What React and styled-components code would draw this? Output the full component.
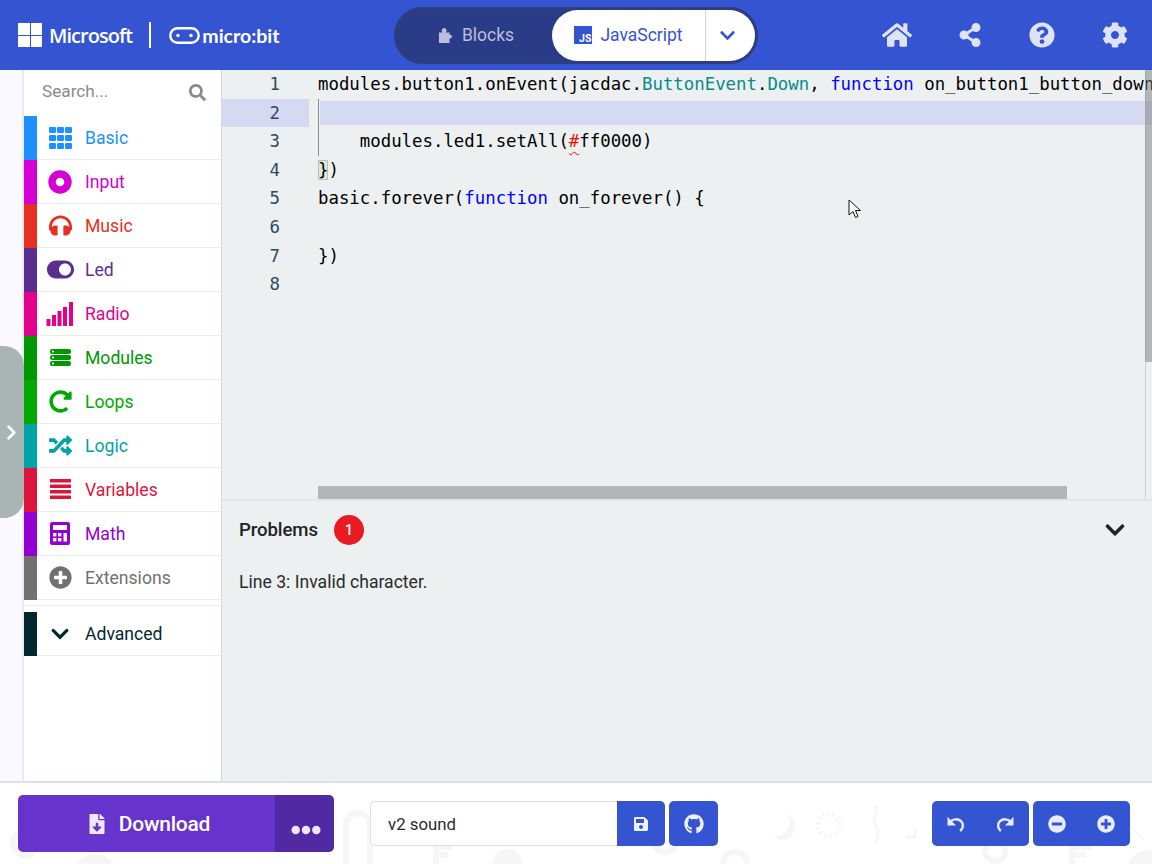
import React from "react";
import styled, { createGlobalStyle } from "styled-components";
import {
  FaHome,
  FaShareAlt,
  FaQuestionCircle,
  FaCog,
  FaSearch,
  FaSave,
  FaGithub,
  FaMinusCircle,
  FaPlusCircle,
  FaFileDownload,
  FaChevronDown,
  FaChevronRight,
  FaHeadphones,
  FaToggleOn,
  FaRandom,
  FaRedoAlt,
  FaEllipsisH,
} from "react-icons/fa";

const GlobalStyle = createGlobalStyle`
  html, body {
    margin: 0;
    padding: 0;
    height: 100%;
    overflow: hidden;
    font-family: Roboto, "Liberation Sans", sans-serif;
  }
  * { box-sizing: border-box; }
`;

const PuzzleIcon = () => (
  <svg width="13" height="15" viewBox="0 0 13 15" fill="currentColor">
    <path d="M0 4.500h3.500C3 4 2.800 3.300 2.800 2.600 2.800 1.200 3.900 0 5.200 0s2.400 1.200 2.400 2.600c0 .7-.2 1.400-.7 1.900H10.500V6.800c1.300-.4 2.500.5 2.500 1.800s-1.200 2.200-2.500 1.800V15H0z" />
  </svg>
);

const BasicIcon = () => (
  <svg width="23" height="22" viewBox="0 0 23 22" fill="currentColor">
    {[0, 8, 16].map((x) =>
      [0, 8, 16].map((y) => <rect key={`${x}-${y}`} x={x} y={y} width="7" height="6" rx="1" />)
    )}
  </svg>
);

const InputIcon = () => (
  <svg width="24" height="24" viewBox="0 0 24 24">
    <circle cx="12" cy="12" r="8" fill="none" stroke="currentColor" strokeWidth="7.4" />
  </svg>
);

const RadioIcon = () => (
  <svg width="28" height="24" viewBox="0 0 28 24" fill="currentColor">
    <rect x="0.5" y="17" width="4" height="7" />
    <rect x="6" y="13" width="4" height="11" />
    <rect x="11.500" y="9" width="4" height="15" />
    <rect x="17" y="5" width="4" height="19" />
    <rect x="23" y="0" width="4" height="24" />
  </svg>
);

const ModulesIcon = () => (
  <svg width="21" height="17" viewBox="0 0 21 17" fill="currentColor">
    {[0, 6, 12].map((y) => (
      <g key={y}>
        <rect x="0" y={y} width="21" height="5" rx="2" />
        <circle cx="3" cy={y + 2.5} r="1.1" fill="#fff" />
      </g>
    ))}
  </svg>
);

const VariablesIcon = () => (
  <svg width="21" height="21" viewBox="0 0 21 21" fill="currentColor">
    {[0, 5.500, 11, 16.500].map((y) => (
      <rect key={y} x="0" y={y} width="21" height="3.6" rx="0.5" />
    ))}
  </svg>
);

const MathIcon = () => (
  <svg width="20" height="23" viewBox="0 0 20 23">
    <rect width="20" height="23" rx="2" fill="currentColor" />
    <rect x="3" y="3" width="14" height="5" fill="#fff" />
    {[3, 8, 13].map((x) =>
      [11, 16].map((y) =>
        x === 13 ? null : <rect key={`${x}-${y}`} x={x} y={y} width="3.4" height="3.4" fill="#fff" />
      )
    )}
    <rect x="13.500" y="11" width="3.500" height="8.500" fill="#fff" />
  </svg>
);

const UndoIcon = ({ flip }) => (
  <svg
    width="18"
    height="16"
    viewBox="0 0 18 16"
    fill="none"
    style={flip ? { transform: "scaleX(-1)" } : undefined}
  >
    <path d="M3.500 5.500C6 2.800 11 2.500 14 5.200c2.800 2.800 2.500 7-.8 9.800" stroke="currentColor" strokeWidth="2.400" />
    <path d="M0.500 0.800V9.500H9z" fill="currentColor" />
  </svg>
);

const categories = [
  { name: "Basic", color: "#1e90ff", icon: <BasicIcon /> },
  { name: "Input", color: "#d400d4", icon: <InputIcon /> },
  { name: "Music", color: "#e63022", icon: <FaHeadphones size={23} /> },
  { name: "Led", color: "#5c2d91", icon: <FaToggleOn size={27} /> },
  { name: "Radio", color: "#e3008c", icon: <RadioIcon /> },
  { name: "Modules", color: "#009800", icon: <ModulesIcon /> },
  { name: "Loops", color: "#00aa00", icon: <FaRedoAlt size={23} /> },
  { name: "Logic", color: "#00a4a6", icon: <FaRandom size={23} /> },
  { name: "Variables", color: "#dc143c", icon: <VariablesIcon /> },
  { name: "Math", color: "#9400d3", icon: <MathIcon /> },
  { name: "Extensions", color: "#717171", icon: <FaPlusCircle size={23} /> },
];

export default function App() {
  return (
    <Page>
      <GlobalStyle />
      <Header>
        <Brand>
          <MsLogo>
            <i />
            <i />
            <i />
            <i />
          </MsLogo>
          <MsName>Microsoft</MsName>
          <BrandDivider />
          <svg width="31" height="17" viewBox="0 0 31 17" fill="none">
            <rect x="1.300" y="1.300" width="28.400" height="14.400" rx="7.200" stroke="#fff" strokeWidth="2.400" />
            <circle cx="9" cy="8.500" r="1.700" fill="#fff" />
            <circle cx="22" cy="8.500" r="1.700" fill="#fff" />
          </svg>
          <BitName>micro:bit</BitName>
        </Brand>
        <Toggle>
          <BlocksTab>
            <PuzzleIcon />
            Blocks
          </BlocksTab>
          <JsTab>
            <JsBadge>JS</JsBadge>
            JavaScript
          </JsTab>
          <ArrowTab>
            <FaChevronDown size={17} />
          </ArrowTab>
        </Toggle>
        <HeaderIcons>
          <FaHome size={30} />
          <FaShareAlt size={24} />
          <FaQuestionCircle size={26} />
          <FaCog size={26} />
        </HeaderIcons>
      </Header>

      <Main>
        <Strip />
        <Toolbox>
          <SearchRow>
            Search...
            <FaSearch size={17} />
          </SearchRow>
          {categories.map((c) => (
            <Category key={c.name} $color={c.color}>
              <CategoryIcon>{c.icon}</CategoryIcon>
              {c.name}
            </Category>
          ))}
          <AdvancedDivider />
          <Category $color="#02272d">
            <CategoryIcon>
              <FaChevronDown size={20} />
            </CategoryIcon>
            Advanced
          </Category>
        </Toolbox>
        <Handle>
          <FaChevronRight size={17} />
        </Handle>

        <Workspace>
          <Editor>
            <Gutter>
              {[1, 2, 3, 4, 5, 6, 7, 8].map((n) => (
                <LineNumber key={n} $active={n === 2}>
                  {n}
                </LineNumber>
              ))}
            </Gutter>
            <Code>
              <IndentGuide />
              <Line>
                modules.button1.onEvent(jacdac.<Type>ButtonEvent</Type>.<Type>Down</Type>,{" "}
                <Keyword>function</Keyword> on_button1_button_down() {"{"}
              </Line>
              <Line $active />
              <Line>
                {"    modules.led1.setAll("}
                <ErrorMark>#</ErrorMark>ff0000)
              </Line>
              <Line>
                <Bracket>{"}"}</Bracket>)
              </Line>
              <Line>
                basic.forever(<Keyword>function</Keyword> on_forever() {"{"}
              </Line>
              <Line />
              <Line>{"})"}</Line>
              <Line />
            </Code>
            <VerticalTrack>
              <VerticalThumb />
            </VerticalTrack>
            <HorizontalThumb />
            <Cursor width="13" height="20" viewBox="0 0 13 20">
              <path d="M1 1v15l4-3.500 2.500 6 2.500-1-2.500-6h5z" fill="#fff" stroke="#111" strokeWidth="1" />
            </Cursor>
          </Editor>
          <Problems>
            <ProblemsHead>
              <ProblemsTitle>Problems</ProblemsTitle>
              <Badge>1</Badge>
              <Collapse>
                <FaChevronDown size={22} />
              </Collapse>
            </ProblemsHead>
            <ProblemText>Line 3: Invalid character.</ProblemText>
          </Problems>
        </Workspace>
      </Main>

      <Footer>
        <Pattern width="1152" height="83" viewBox="0 0 1152 83" fill="none" stroke="#f6f6f6">
          <rect x="346" y="32" width="24" height="70" rx="12" strokeWidth="6" />
          <path d="M18 52a12 12 0 0 0 16 20" strokeWidth="6" />
          <circle cx="95" cy="95" r="22" fill="#f6f6f6" stroke="none" />
          <path d="M436 83V66h16M436 74h12" strokeWidth="6" />
          <circle cx="507" cy="83" r="15" fill="#f6f6f6" stroke="none" />
          <path d="M653 64a14 14 0 0 0 24 0" strokeWidth="6" />
          <circle cx="735" cy="83" r="12" strokeWidth="6" />
          <path d="M788 34a11 11 0 0 1-13 22 14 14 0 0 0 13-22z" fill="#f6f6f6" strokeWidth="2" />
          <circle cx="829" cy="44" r="11" strokeWidth="5" strokeDasharray="2 3" />
          <path d="M875 25c5 8-4 10 0 18s4 10 1 20" strokeWidth="2.500" />
          <path d="M915 47v9h-9" strokeWidth="3" />
          <circle cx="995" cy="70" r="10" strokeWidth="6" />
          <path d="M1072 83V66h20M1072 74h14" strokeWidth="6" />
          <circle cx="1147" cy="88" r="19" fill="#f6f6f6" stroke="none" />
          <path d="M1130 45l15 15" strokeWidth="1.500" />
        </Pattern>
        <DownloadGroup>
          <DownloadButton>
            <FaFileDownload size={20} />
            Download
          </DownloadButton>
          <MoreButton>
            <FaEllipsisH size={30} />
          </MoreButton>
        </DownloadGroup>
        <NameGroup>
          <NameInput>v2 sound</NameInput>
          <SaveButton>
            <FaSave size={16} />
          </SaveButton>
        </NameGroup>
        <GithubButton>
          <FaGithub size={20} />
        </GithubButton>
        <EditGroups>
          <EditGroup>
            <EditButton>
              <UndoIcon />
            </EditButton>
            <EditButton>
              <UndoIcon flip />
            </EditButton>
          </EditGroup>
          <EditGroup>
            <EditButton>
              <FaMinusCircle size={18} />
            </EditButton>
            <EditButton>
              <FaPlusCircle size={18} />
            </EditButton>
          </EditGroup>
        </EditGroups>
      </Footer>
    </Page>
  );
}

const Page = styled.div`
  width: 1152px;
  height: 864px;
  display: flex;
  flex-direction: column;
  overflow: hidden;
  background: #fff;
`;

const Header = styled.header`
  height: 70px;
  flex: none;
  display: grid;
  grid-template-columns: 394px 364px 1fr;
  align-items: center;
  background: #3454d1;
  color: #fff;
`;

const Brand = styled.div`
  display: flex;
  align-items: center;
  padding-left: 18px;
`;

const MsLogo = styled.div`
  width: 24px;
  height: 24px;
  display: grid;
  grid-template-columns: 11.5px 11.5px;
  grid-template-rows: 11.5px 11.5px;
  gap: 1px;

  i {
    background: #fff;
  }
`;

const MsName = styled.span`
  margin-left: 7px;
  font-family: "Open Sans", sans-serif;
  font-size: 20px;
  font-weight: 600;
  letter-spacing: -0.95px;
`;

const BrandDivider = styled.span`
  width: 2px;
  height: 26px;
  margin: 0 18px 0 17px;
  background: #fff;
`;

const BitName = styled.span`
  margin-left: 2px;
  font-family: Lato, sans-serif;
  font-size: 19.5px;
  font-weight: 700;
`;

const Toggle = styled.div`
  height: 57px;
  display: flex;
  border: 3px solid #2c3d80;
  border-radius: 29px;
  background: #2a3c87;
`;

const BlocksTab = styled.div`
  width: 155px;
  display: flex;
  align-items: center;
  justify-content: center;
  gap: 10px;
  padding-left: 4px;
  font-size: 17.5px;
  color: #b9bfdc;
`;

const JsTab = styled.div`
  width: 153px;
  display: flex;
  align-items: center;
  justify-content: center;
  gap: 8px;
  font-size: 17.5px;
  color: #3454d1;
  background: #fff;
  border-radius: 26px 0 0 26px;
`;

const JsBadge = styled.span`
  width: 18px;
  height: 18px;
  display: flex;
  align-items: flex-end;
  justify-content: flex-end;
  padding: 0 1px 0 0;
  font-size: 10.5px;
  line-height: 11px;
  font-weight: 700;
  color: #fff;
  background: #3454d1;
`;

const ArrowTab = styled.div`
  flex: 1;
  display: flex;
  align-items: center;
  justify-content: center;
  padding-right: 6px;
  color: #3454d1;
  background: #fff;
  border-left: 1px solid #d4d4d5;
  border-radius: 0 26px 26px 0;
`;

const HeaderIcons = styled.div`
  display: flex;
  align-items: center;
  justify-content: flex-end;
  gap: 47px;
  padding-right: 24px;
  color: #dfe3f6;

  svg:first-child {
    margin-right: -1px;
  }
`;

const Main = styled.main`
  flex: 1;
  position: relative;
  display: flex;
  min-height: 0;
`;

const Strip = styled.div`
  width: 22px;
  flex: none;
  background: #f9f9ff;
`;

const Toolbox = styled.aside`
  width: 200px;
  flex: none;
  background: #fff;
  border-left: 2px solid #e8eaed;
  border-right: 1px solid #d6dada;
`;

const SearchRow = styled.div`
  height: 46px;
  display: flex;
  align-items: center;
  justify-content: space-between;
  padding: 0 15px 4px 18px;
  font-size: 17.2px;
  color: #8a8a8a;

  svg {
    margin-top: 3px;
  }
`;

const Category = styled.div`
  height: 44px;
  display: flex;
  align-items: center;
  padding-bottom: 1px;
  border-left: 13px solid ${(p) => p.$color};
  font-size: 17.6px;
  color: ${(p) => p.$color};
  box-shadow: inset 0 -1px 0 #ececec;
`;

const CategoryIcon = styled.span`
  width: 46px;
  height: 24px;
  margin-right: 2px;
  display: flex;
  align-items: center;
  justify-content: center;
`;

const AdvancedDivider = styled.div`
  height: 12px;
  margin-bottom: 0;
  background: linear-gradient(#ececec, #ececec) 0 5px / 100% 1px no-repeat;
`;

const Handle = styled.div`
  position: absolute;
  left: 0;
  top: 276px;
  width: 24px;
  height: 172px;
  display: flex;
  align-items: center;
  justify-content: flex-start;
  padding-left: 3px;
  color: #fff;
  background: #a9b5b5;
  border-radius: 0 20px 20px 0;
`;

const Workspace = styled.section`
  flex: 1;
  min-width: 0;
  display: flex;
  flex-direction: column;
  background: #ecf0f1;
`;

const Editor = styled.div`
  position: relative;
  height: 429px;
  flex: none;
  display: flex;
  overflow: hidden;
  border-bottom: 0;
`;

const Gutter = styled.div`
  width: 87px;
  flex: none;
  padding-top: 0;
`;

const LineNumber = styled.div`
  height: 28.6px;
  line-height: 28.6px;
  padding-right: 29px;
  text-align: right;
  font-family: "DejaVu Sans Mono", monospace;
  font-size: 17.37px;
  color: #2d4a5f;
  background: ${(p) => (p.$active ? "#d5d9f2" : "transparent")};
`;

const Code = styled.div`
  position: relative;
  flex: 1;
  min-width: 0;
  margin-left: 9px;
  overflow: hidden;
  font-family: "DejaVu Sans Mono", monospace;
  font-size: 17.37px;
  color: #000;
`;

const Line = styled.div`
  height: 28.6px;
  line-height: 28.6px;
  white-space: pre;
  ${(p) =>
    p.$active &&
    `
    margin-left: 2px;
    border-top: 2px solid transparent;
    border-bottom: 2px solid transparent;
    background: #d5d9f2 padding-box;
  `}
`;

const Keyword = styled.span`
  color: #0000ff;
`;

const Type = styled.span`
  color: #098a8a;
`;

const ErrorMark = styled.span`
  color: #e51400;
  text-decoration: underline wavy #e51400 1px;
  text-underline-offset: 4px;
`;

const Bracket = styled.span`
  background: #dfe8de;
  outline: 1px solid #b4c4b4;
  outline-offset: -1px;
`;

const IndentGuide = styled.div`
  position: absolute;
  left: 0;
  top: 29px;
  width: 1px;
  height: 57px;
  background: #8a8f92;
`;

const VerticalTrack = styled.div`
  position: absolute;
  top: 0;
  right: 0;
  bottom: 0;
  width: 7px;
  border-left: 1px solid #cfd3d5;
`;

const VerticalThumb = styled.div`
  height: 292px;
  margin-left: -1px;
  background: rgba(110, 110, 110, 0.45);
`;

const HorizontalThumb = styled.div`
  position: absolute;
  left: 96px;
  bottom: 0;
  width: 749px;
  height: 13px;
  background: #b4b5b6;
`;

const Cursor = styled.svg`
  position: absolute;
  left: 626px;
  top: 129px;
`;

const Problems = styled.div`
  flex: 1;
  min-height: 0;
  padding: 0 17px;
  border-top: 2px solid #e3e5e8;
  color: #222;
`;

const ProblemsHead = styled.div`
  height: 57px;
  display: flex;
  align-items: center;
  gap: 16px;
`;

const ProblemsTitle = styled.span`
  font-size: 18.6px;
  font-weight: 500;
  letter-spacing: -0.1px;
`;

const Badge = styled.span`
  width: 30px;
  height: 30px;
  display: flex;
  align-items: center;
  justify-content: center;
  border-radius: 50%;
  font-size: 14px;
  font-weight: 500;
  color: #fff;
  background: #e81b23;
`;

const Collapse = styled.span`
  margin-left: auto;
  display: flex;
  padding-right: 9px;
`;

const ProblemText = styled.div`
  margin-top: 14px;
  font-size: 17.6px;
  line-height: 20px;
  color: #2b2b2b;
`;

const Footer = styled.footer`
  position: relative;
  height: 83px;
  flex: none;
  display: flex;
  align-items: flex-start;
  padding: 12px 22px 0 18px;
  background: #fff;
  border-top: 2px solid #dcdff0;
`;

const Pattern = styled.svg`
  position: absolute;
  left: 0;
  top: -2px;
  pointer-events: none;
`;

const DownloadGroup = styled.div`
  position: relative;
  width: 316px;
  height: 57px;
  display: flex;
  color: #fff;
  border-radius: 5px;
  overflow: hidden;
`;

const DownloadButton = styled.div`
  flex: 1;
  display: flex;
  align-items: center;
  justify-content: center;
  gap: 12px;
  padding-left: 4px;
  font-size: 21px;
  font-weight: 500;
  letter-spacing: -0.25px;
  background: #6633cc;

  svg {
    color: #efe8fb;
  }
`;

const MoreButton = styled.div`
  width: 59px;
  display: flex;
  align-items: flex-end;
  justify-content: center;
  padding: 0 0 7px 3px;
  color: #eee8fa;
  background: #5129a3;
`;

const NameGroup = styled.div`
  position: relative;
  width: 295px;
  height: 45px;
  display: flex;
  margin: 6px 4px 0 36px;
`;

const NameInput = styled.div`
  flex: 1;
  display: flex;
  align-items: center;
  padding-left: 17px;
  font-size: 16.8px;
  color: #2a2a2a;
  background: #fff;
  border: 1px solid #dedede;
  border-right: 0;
  border-radius: 5px 0 0 5px;
`;

const SaveButton = styled.div`
  width: 48px;
  display: flex;
  align-items: center;
  justify-content: center;
  color: #eef0fb;
  background: #3454d1;
  border-radius: 0 5px 5px 0;
`;

const GithubButton = styled.div`
  position: relative;
  width: 49px;
  height: 45px;
  margin-top: 6px;
  display: flex;
  align-items: center;
  justify-content: center;
  color: #eef0fb;
  background: #3454d1;
  border-radius: 5px;
`;

const EditGroups = styled.div`
  position: relative;
  margin: 6px 0 0 auto;
  display: flex;
  gap: 4px;
`;

const EditGroup = styled.div`
  width: 97px;
  height: 45px;
  display: flex;
  background: #3454d1;
  border-radius: 5px;
`;

const EditButton = styled.div`
  flex: 1;
  display: flex;
  align-items: center;
  justify-content: center;
  color: #e9ecfa;
`;
